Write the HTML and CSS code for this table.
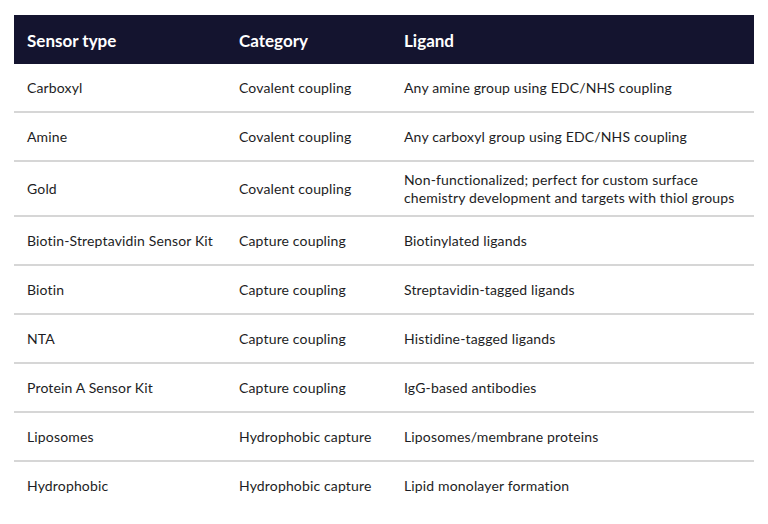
FILE: index.html
```html
<!DOCTYPE html>
<html lang="en">
<head>
    <meta charset="UTF-8">
    <meta name="viewport" content="width=device-width, initial-scale=1.0">
    <title>Sensor types</title>
    <link rel="stylesheet" href="styles.css">
</head>
<body>
    <table class="sensor-table">
        <thead>
            <tr>
                <th class="col-type">Sensor type</th>
                <th class="col-cat">Category</th>
                <th>Ligand</th>
            </tr>
        </thead>
        <tbody>
            <tr>
                <td>Carboxyl</td>
                <td>Covalent coupling</td>
                <td>Any amine group using EDC/NHS coupling</td>
            </tr>
            <tr>
                <td>Amine</td>
                <td>Covalent coupling</td>
                <td>Any carboxyl group using EDC/NHS coupling</td>
            </tr>
            <tr class="tall">
                <td>Gold</td>
                <td>Covalent coupling</td>
                <td>Non-functionalized; perfect for custom surface<br>chemistry development and targets with thiol groups</td>
            </tr>
            <tr>
                <td>Biotin-Streptavidin Sensor Kit</td>
                <td>Capture coupling</td>
                <td>Biotinylated ligands</td>
            </tr>
            <tr>
                <td>Biotin</td>
                <td>Capture coupling</td>
                <td>Streptavidin-tagged ligands</td>
            </tr>
            <tr>
                <td>NTA</td>
                <td>Capture coupling</td>
                <td>Histidine-tagged ligands</td>
            </tr>
            <tr>
                <td>Protein A Sensor Kit</td>
                <td>Capture coupling</td>
                <td>IgG-based antibodies</td>
            </tr>
            <tr>
                <td>Liposomes</td>
                <td>Hydrophobic capture</td>
                <td>Liposomes/membrane proteins</td>
            </tr>
            <tr>
                <td>Hydrophobic</td>
                <td>Hydrophobic capture</td>
                <td>Lipid monolayer formation</td>
            </tr>
        </tbody>
    </table>
</body>
</html>
```

FILE: styles.css
```css
body {
    margin: 0;
    padding: 15px 14px;
    background-color: #fff;
    font-family: Lato, "Open Sans", sans-serif;
    color: #1d1d24;
}
.sensor-table {
    width: 740px;
    border-collapse: collapse;
    table-layout: fixed;
}
.sensor-table th {
    background-color: #14142f;
    color: #fff;
    font-size: 17px;
    font-weight: 700;
    text-align: left;
    height: 47px;
    padding: 2px 13px 0;
}
.col-type {
    width: 186px;
}
.col-cat {
    width: 139px;
}
.sensor-table td {
    font-size: 14px;
    line-height: 18px;
    letter-spacing: 0.15px;
    white-space: nowrap;
    height: 46px;
    padding: 1px 13px 0;
    vertical-align: middle;
    border-bottom: 2px solid #d6d6d6;
}
.sensor-table tr.tall td {
    height: 52px;
}
.sensor-table tbody tr:last-child td {
    border-bottom: none;
}
```
